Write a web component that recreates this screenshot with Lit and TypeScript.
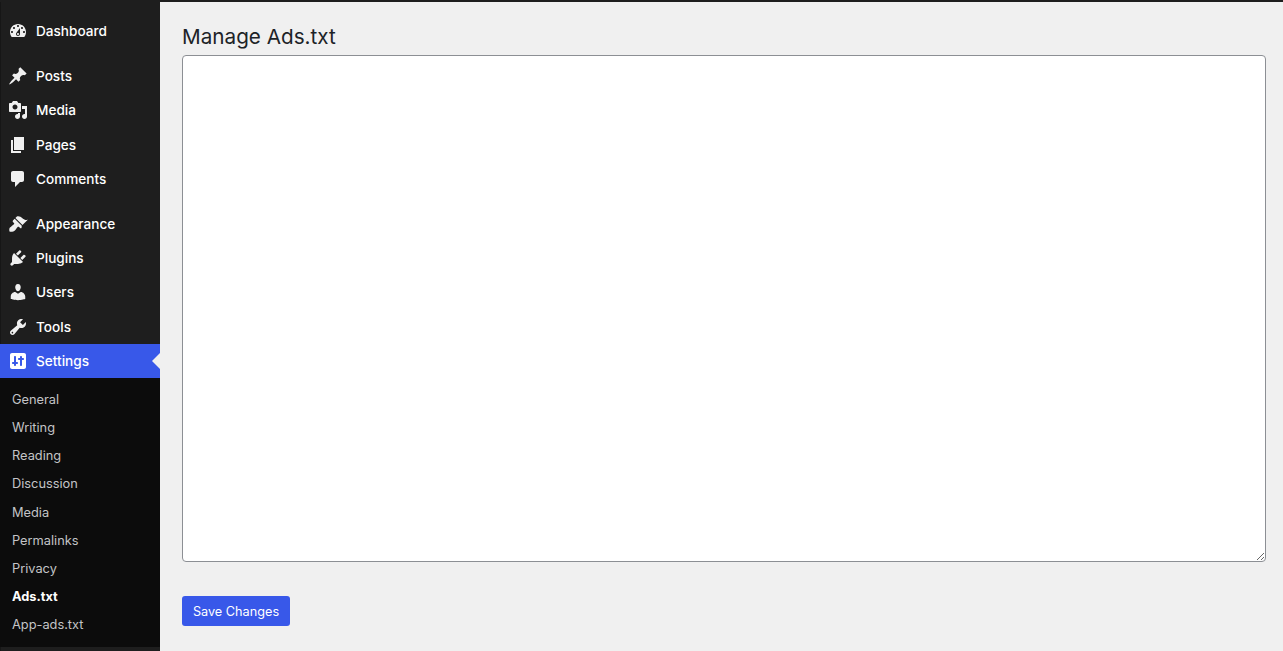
import { LitElement, html, css, svg } from "lit";
import { customElement } from "lit/decorators.js";

const ICONS: Record<string, string> = {
  dashboard: "M3.76 16h12.48c1.1-1.37 1.76-3.11 1.76-5 0-4.42-3.58-8-8-8s-8 3.58-8 8c0 1.89.66 3.63 1.76 5zM10 4c.55 0 1 .45 1 1s-.45 1-1 1-1-.45-1-1 .45-1 1-1zM6 6c.55 0 1 .45 1 1s-.45 1-1 1-1-.45-1-1 .45-1 1-1zm8 0c.55 0 1 .45 1 1s-.45 1-1 1-1-.45-1-1 .45-1 1-1zm-5.37 5.55L12 7v6c0 1.1-.9 2-2 2s-2-.9-2-2c0-.57.24-1.08.63-1.45zM4 10c.55 0 1 .45 1 1s-.45 1-1 1-1-.45-1-1 .45-1 1-1zm12 0c.55 0 1 .45 1 1s-.45 1-1 1-1-.45-1-1 .45-1 1-1zm-5 3c0-.55-.45-1-1-1s-1 .45-1 1 .45 1 1 1 1-.45 1-1z",
  posts: "M10.44 3.02l1.82-1.82 6.36 6.35-1.83 1.82c-1.05-.68-2.48-.57-3.41.36l-.75.75c-.92.93-1.04 2.35-.35 3.41l-1.83 1.82-2.41-2.41-2.8 2.79c-.42.42-3.38 2.71-3.8 2.29s1.86-3.39 2.28-3.81l2.79-2.79L4.1 9.36l1.83-1.82c1.05.69 2.48.57 3.4-.36l.75-.75c.93-.92 1.05-2.35.36-3.41z",
  media: "M13 11V4c0-.55-.45-1-1-1h-1.67L9 1H5L3.67 3H2c-.55 0-1 .45-1 1v7c0 .55.45 1 1 1h10c.55 0 1-.45 1-1zM7 4.500c1.380 0 2.500 1.120 2.500 2.500S8.380 9.500 7 9.500 4.500 8.380 4.500 7 5.620 4.500 7 4.500zM14 6h5v10.500c0 1.380-1.120 2.500-2.500 2.500S14 17.880 14 16.500s1.120-2.500 2.500-2.500c.17 0 .34.020.5.050V9h-3V6zm-4 8.050V13h2v3.500c0 1.380-1.120 2.500-2.500 2.500S7 17.880 7 16.500 8.120 14 9.500 14c.17 0 .34.020.5.050z",
  pages: "M6 15V2h10v13H6zm-1 1h8v2H3V5h2v11z",
  comments: "M5 2h9c1.100 0 2 .9 2 2v7c0 1.100-.9 2-2 2h-2l-5 5v-5H5c-1.100 0-2-.9-2-2V4c0-1.100.9-2 2-2z",
  appearance: "M14.480 11.060L7.410 3.990l1.500-1.500c.5-.56 2.300-.47 3.510.32 1.210.8 1.430 1.280 2.910 2.100 1.180.64 2.450 1.260 4.450.85zm-.71.71L6.700 4.700 4.930 6.470c-.39.39-.39 1.020 0 1.410l1.060 1.060c.39.39.39 1.030 0 1.420-.6.6-1.430 1.110-2.210 1.690-.35.260-.7.530-1.010.840C1.430 13.230.850 15.300 1.500 17.500c1.500.650 4.270.07 5.610-1.270.31-.31.580-.66.840-1.010.58-.78 1.090-1.610 1.690-2.210.39-.39 1.030-.39 1.420 0l1.060 1.060c.39.39 1.020.39 1.410 0z",
  plugins: "M13.110 4.360L9.870 7.600 8 5.730l3.240-3.240c.35-.34 1.050-.2 1.560.32.52.51.66 1.210.31 1.550zm-8 1.770l.91-1.120 9.010 9.010-1.190.84c-.71.71-2.630 1.160-3.820 1.160H6.140L4.900 17.260c-.59.59-1.540.59-2.120 0-.59-.58-.59-1.530 0-2.120l1.240-1.240v-3.880c0-1.130.52-3.130 1.090-3.890zm7.260 3.970l3.240-3.240c.34-.35 1.040-.21 1.550.31.52.51.66 1.210.31 1.550l-3.240 3.250z",
  users: "M10 9.250c-2.270 0-2.730-3.440-2.730-3.440C7 4.020 7.820 2 9.970 2c2.160 0 2.980 2.020 2.710 3.810 0 0-.41 3.440-2.680 3.440zm0 2.570L12.720 10c2.390 0 4.520 2.330 4.520 4.530v2.490s-3.650 1.130-7.240 1.130c-3.650 0-7.240-1.130-7.240-1.130v-2.490c0-2.250 1.940-4.480 4.470-4.480z",
  tools: "M16.680 9.770c-1.340 1.340-3.300 1.670-4.950.99l-5.410 6.520c-.99.99-2.590.99-3.570 0-.99-.98-.99-2.580 0-3.570l6.520-5.420c-.68-1.650-.35-3.610.99-4.950 1.280-1.280 3.120-1.620 4.720-1.060l-2.890 2.890 2.820 2.820 2.860-2.870c.53 1.580.18 3.400-1.090 4.670zM3.810 16.190c.33.330.87.330 1.200 0 .33-.33.33-.87 0-1.200-.33-.33-.87-.33-1.200 0-.33.33-.33.87 0 1.200z",
  settings: "M18 16V4c0-1.100-.9-2-2-2H4c-1.100 0-2 .9-2 2v12c0 1.100.9 2 2 2h12c1.100 0 2-.9 2-2zM8 11h1c.55 0 1 .45 1 1s-.45 1-1 1H8v1c0 .55-.45 1-1 1s-1-.45-1-1v-1H5c-.55 0-1-.45-1-1s.45-1 1-1h1V6c0-.55.45-1 1-1s1 .45 1 1v5zm7-2h-1v5c0 .55-.45 1-1 1s-1-.45-1-1V9h-1c-.55 0-1-.45-1-1s.45-1 1-1h1V6c0-.55.45-1 1-1s1 .45 1 1v1h1c.55 0 1 .45 1 1s-.45 1-1 1z",
};

const GROUPS = [
  [["dashboard", "Dashboard"]],
  [["posts", "Posts"], ["media", "Media"], ["pages", "Pages"], ["comments", "Comments"]],
  [["appearance", "Appearance"], ["plugins", "Plugins"], ["users", "Users"], ["tools", "Tools"], ["settings", "Settings"]],
];
const SUB = ["General", "Writing", "Reading", "Discussion", "Media", "Permalinks", "Privacy", "Ads.txt", "App-ads.txt"];

@customElement("app-root")
export class AppRoot extends LitElement {
  static styles = css`
    :host {
      display: flex;
      height: 651px;
      width: 1283px;
      overflow: hidden;
      background: #f0f0f0;
      font-family: Inter, "Liberation Sans", sans-serif;
      border-top: 2px solid #1e1e1e;
      box-sizing: border-box;
    }
    .side {
      width: 160px;
      flex: none;
      background: linear-gradient(to right, #161616 1px, #1e1e1e 1px);
      padding-top: 11.85px;
      box-sizing: border-box;
      display: flex;
      flex-direction: column;
    }
    .group { margin-bottom: 10.6px; }
    .group.last { margin-bottom: 0; }
    .item {
      position: relative;
      height: 34.33px;
      display: flex;
      align-items: center;
      color: #fff;
      font-size: 13.6px;
      font-weight: 450;
      padding-left: 8px;
      gap: 8px;
    }
    .item svg { width: 20px; height: 20px; fill: #f0f0f0; flex: none; }
    .item.active { background: #3858e9; }
    .item.active svg { fill: #fff; }
    .item.active::after {
      content: "";
      position: absolute;
      right: 0;
      top: 50%;
      margin-top: -8.5px;
      border: 8.5px solid transparent;
      border-left-width: 0;
      border-right-color: #f0f0f0;
    }
    .sub {
      background: #0c0c0c;
      padding: 7.7px 0 8.2px;
      color: #c3c4c7;
      font-size: 12.8px;
    }
    .sub div {
      height: 28.15px;
      line-height: 28px;
      padding-left: 12px;
    }
    .sub .cur { color: #fff; font-weight: 700; }
    main {
      flex: 1;
      padding: 0 17px 0 22px;
      display: flex;
      flex-direction: column;
      align-items: flex-start;
    }
    h1 {
      margin: 0;
      font-size: 20.7px;
      font-weight: 400;
      color: #1d2327;
      height: 53px;
      line-height: 69px;
    }
    textarea {
      display: block;
      width: 100%;
      height: 507px;
      box-sizing: border-box;
      border: 1px solid #8c8f94;
      border-radius: 4px;
      background: #fff;
      margin: 0;
      outline: none;
      resize: vertical;
    }
    button {
      margin-top: 34px;
      width: 108px;
      height: 30px;
      border: none;
      border-radius: 3px;
      background: #3858e9;
      color: #fff;
      font: 400 12.7px Inter, "Liberation Sans", sans-serif;
      padding: 0;
    }
  `;

  render() {
    return html`
      <nav class="side">
        ${GROUPS.map((g, i) => html`
          <div class="group ${i === 2 ? "last" : ""}">
            ${g.map(([k, label]) => html`
              <div class="item ${k === "settings" ? "active" : ""}">
                <svg viewBox="0 0 20 20">${svg`<path d=${ICONS[k]}></path>`}</svg>
                <span>${label}</span>
              </div>`)}
          </div>`)}
        <div class="sub">
          ${SUB.map((s) => html`<div class=${s === "Ads.txt" ? "cur" : ""}>${s}</div>`)}
        </div>
      </nav>
      <main>
        <h1>Manage Ads.txt</h1>
        <textarea></textarea>
        <button>Save Changes</button>
      </main>
    `;
  }
}
